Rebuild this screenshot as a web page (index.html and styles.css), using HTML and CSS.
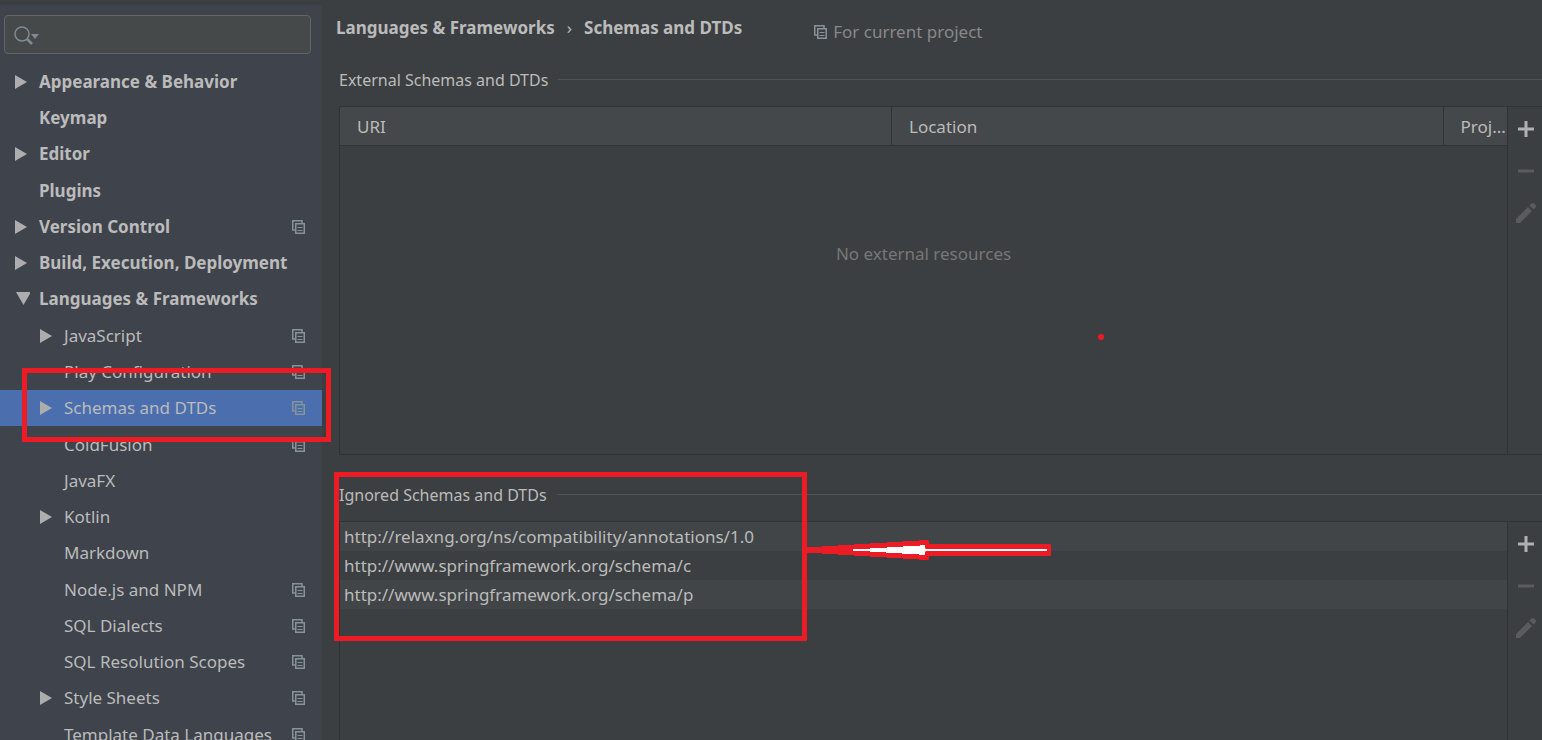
FILE: index.html
```html
<!DOCTYPE html>
<html lang="en">
<head>
  <meta charset="UTF-8">
  <title>Settings</title>
  <link rel="stylesheet" href="styles.css">
</head>
<body>
  <svg class="sprite" aria-hidden="true">
    <symbol id="project" viewBox="0 0 14 14">
      <path d="M4 10H1.750V.750H11V3" fill="none" stroke="currentColor" stroke-width="1.500"/>
      <rect x="4.750" y="3.750" width="8.500" height="9.500" fill="none" stroke="currentColor" stroke-width="1.500"/>
      <path d="M6.500 7.500h5M6.500 10.500h5" stroke="currentColor" stroke-width="1"/>
    </symbol>
    <symbol id="right" viewBox="0 0 14 14"><path d="M1 0l12 7-12 7z" fill="currentColor"/></symbol>
    <symbol id="down" viewBox="0 0 14 14"><path d="M0 0h15L7.500 13z" fill="currentColor"/></symbol>
    <symbol id="plus" viewBox="0 0 22 22"><path d="M9.500 3h3v6.500H19v3h-6.500V19h-3v-6.500H3v-3h6.500z" fill="currentColor"/></symbol>
    <symbol id="minus" viewBox="0 0 22 22"><path d="M3 9.500h16v3H3z" fill="currentColor"/></symbol>
    <symbol id="pencil" viewBox="0 0 22 22">
      <path d="M1 17L13 5l4 4L5 21H1zM14.500 3.500l2-2q1.500-1 3 .5l1 1q1 1.500 0 2.500l-2 2z" fill="currentColor"/>
    </symbol>
  </svg>

  <aside class="sidebar">
    <label class="search">
      <svg class="search-icon" viewBox="0 0 26 20" aria-hidden="true">
        <circle cx="8" cy="8" r="7" fill="none" stroke="currentColor" stroke-width="1.500"/>
        <path d="M13 13l5 5" stroke="currentColor" stroke-width="2.500"/>
        <path d="M17 8h8l-4 5z" fill="currentColor"/>
      </svg>
      <input type="text" aria-label="Search settings">
    </label>

    <ul class="tree">
      <li><a href="#"><svg class="arrow"><use href="#right"/></svg><span>Appearance &amp; Behavior</span></a></li>
      <li><a href="#"><span>Keymap</span></a></li>
      <li><a href="#"><svg class="arrow"><use href="#right"/></svg><span>Editor</span></a></li>
      <li><a href="#"><span>Plugins</span></a></li>
      <li><a href="#"><svg class="arrow"><use href="#right"/></svg><span>Version Control</span><svg class="project"><use href="#project"/></svg></a></li>
      <li><a href="#"><svg class="arrow"><use href="#right"/></svg><span>Build, Execution, Deployment</span></a></li>
      <li>
        <a href="#"><svg class="arrow open"><use href="#down"/></svg><span>Languages &amp; Frameworks</span></a>
        <ul class="subtree">
          <li><a href="#"><svg class="arrow"><use href="#right"/></svg><span>JavaScript</span><svg class="project"><use href="#project"/></svg></a></li>
          <li><a href="#"><span>Play Configuration</span><svg class="project"><use href="#project"/></svg></a></li>
          <li><a href="#" class="selected"><svg class="arrow"><use href="#right"/></svg><span>Schemas and DTDs</span><svg class="project"><use href="#project"/></svg></a></li>
          <li><a href="#"><span>ColdFusion</span><svg class="project"><use href="#project"/></svg></a></li>
          <li><a href="#"><span>JavaFX</span></a></li>
          <li><a href="#"><svg class="arrow"><use href="#right"/></svg><span>Kotlin</span></a></li>
          <li><a href="#"><span>Markdown</span></a></li>
          <li><a href="#"><span>Node.js and NPM</span><svg class="project"><use href="#project"/></svg></a></li>
          <li><a href="#"><span>SQL Dialects</span><svg class="project"><use href="#project"/></svg></a></li>
          <li><a href="#"><span>SQL Resolution Scopes</span><svg class="project"><use href="#project"/></svg></a></li>
          <li><a href="#"><svg class="arrow"><use href="#right"/></svg><span>Style Sheets</span><svg class="project"><use href="#project"/></svg></a></li>
          <li><a href="#"><span>Template Data Languages</span><svg class="project"><use href="#project"/></svg></a></li>
        </ul>
      </li>
    </ul>
  </aside>

  <main class="content">
    <header class="header">
      <h1 class="breadcrumb">
        <span>Languages &amp; Frameworks</span>
        <span class="separator">›</span>
        <span>Schemas and DTDs</span>
      </h1>
      <p class="scope"><svg class="project"><use href="#project"/></svg>For current project</p>
    </header>

    <section class="group external">
      <h2>External Schemas and DTDs</h2>
      <div class="panel">
        <div class="list">
          <table>
            <thead>
              <tr><th>URI</th><th>Location</th><th class="narrow">Proj...</th></tr>
            </thead>
          </table>
          <p class="empty">No external resources</p>
        </div>
        <div class="toolbar">
          <button aria-label="Add"><svg><use href="#plus"/></svg></button>
          <button aria-label="Remove" disabled><svg><use href="#minus"/></svg></button>
          <button aria-label="Edit" disabled><svg><use href="#pencil"/></svg></button>
        </div>
      </div>
    </section>

    <section class="group ignored">
      <h2>Ignored Schemas and DTDs</h2>
      <div class="panel">
        <ul class="list urls">
          <li>http://relaxng.org/ns/compatibility/annotations/1.0</li>
          <li>http://www.springframework.org/schema/c</li>
          <li>http://www.springframework.org/schema/p</li>
        </ul>
        <div class="toolbar">
          <button aria-label="Add"><svg><use href="#plus"/></svg></button>
          <button aria-label="Remove" disabled><svg><use href="#minus"/></svg></button>
          <button aria-label="Edit" disabled><svg><use href="#pencil"/></svg></button>
        </div>
      </div>
    </section>
  </main>

  <!-- red marks drawn over the dialog -->
  <div class="mark mark-menu"></div>
  <div class="mark mark-list"></div>
  <div class="mark-dot"></div>
  <svg class="mark-arrow" viewBox="0 0 246 22" aria-hidden="true">
    <path d="M0 7h16V6h16V5h16V4h16V3h17V2h16V1h16V0h9l1 1v3h121l1 1v10l-1 1H123v3l-1 1h-9v-1H97v-1H81v-1H64v-1H48v-1H32v-1H16v-1H0z" fill="#ed1c24"/>
    <path d="M47 9h17V8h17V7h16V6h17V5h5v3l1 1h121v2H120l-1 1v3h-6v-1H96v-1H80v-1H64v-1H47z" fill="#fff"/>
  </svg>
</body>
</html>
```

FILE: styles.css
```css
* {
  box-sizing: border-box;
}
body {
  margin: 0;
  height: 100vh;
  display: flex;
  position: relative;
  overflow: hidden;
  padding-top: 5px;
  background: #3c3f41;
  color: #bbbbbb;
  font-family: "Noto Sans", "Open Sans", sans-serif;
  font-size: 17px;
  line-height: 24px;
}
h1, h2, p, ul {
  margin: 0;
  padding: 0;
}
ul {
  list-style: none;
}
svg {
  display: block;
  flex: none;
}
.sprite {
  position: absolute;
  width: 0;
  height: 0;
}

/* sidebar */
.sidebar {
  flex: none;
  width: 322px;
  background: #3f434b;
  overflow: hidden;
}
.search {
  display: flex;
  align-items: center;
  height: 39px;
  margin: 10px 11px 10px 4px;
  padding: 2px 9px 0;
  border: 1px solid #646464;
  border-radius: 4px;
  background: #45494a;
}
.search-icon {
  width: 26px;
  height: 20px;
  color: #7f8b91;
}
.search input {
  flex: 1;
  min-width: 0;
  border: none;
  outline: none;
  background: none;
  color: inherit;
  font: inherit;
}
.tree a {
  display: flex;
  align-items: center;
  height: 36px;
  padding: 0 17px 0 39px;
  color: inherit;
  font-weight: bold;
  text-decoration: none;
  white-space: nowrap;
}
.tree > li:nth-child(4n) > a,
.subtree > li:nth-child(4n) > a {
  height: 37px;
}
.subtree {
  padding-top: 1px;
}
.tree .subtree a {
  padding-left: 64px;
  font-weight: normal;
}
.tree a.selected {
  background: #4b6eaf;
}
.arrow {
  width: 14px;
  height: 14px;
  margin-left: -25px;
  margin-right: 11px;
  color: #adadad;
}
.arrow.open {
  margin-left: -23px;
  margin-right: 9px;
}
.project {
  width: 14px;
  height: 14px;
  color: #87939a;
}
.tree .project {
  margin-left: auto;
}

/* content */
.content {
  flex: 1;
  min-width: 0;
  display: flex;
  flex-direction: column;
  padding-left: 17px;
}
.header {
  display: flex;
  align-items: center;
  height: 46px;
}
.breadcrumb {
  display: flex;
  margin-left: -3px;
  font-size: 17px;
}
.separator {
  margin: 0 12px;
  font-weight: normal;
}
.scope {
  display: flex;
  align-items: center;
  gap: 6px;
  margin-left: 71px;
  padding-top: 8px;
  color: #888888;
}
.group {
  display: flex;
  flex-direction: column;
}
.external {
  flex: none;
  height: 404px;
  padding-top: 2px;
}
.ignored {
  flex: 1;
  padding-top: 13px;
}
.group h2 {
  display: flex;
  align-items: center;
  gap: 10px;
  height: 53px;
  font-size: 16px;
  font-weight: normal;
}
.group h2::after {
  content: "";
  flex: 1;
  height: 1px;
  background: #515151;
}
.panel {
  flex: 1;
  display: flex;
  border-top: 1px solid #323232;
}
.external .panel {
  border-bottom: 1px solid #323232;
}
.list {
  flex: 1;
  min-width: 0;
  display: flex;
  flex-direction: column;
  border: 1px solid #323232;
  border-width: 0 1px;
}
table {
  width: 100%;
  table-layout: fixed;
  border-collapse: collapse;
}
th {
  height: 38px;
  padding: 3px 0 0 17px;
  border-bottom: 1px solid #323232;
  border-right: 1px solid #323232;
  background: #45484a;
  font-weight: normal;
  text-align: left;
  white-space: nowrap;
}
th.narrow {
  width: 64px;
  border-right: none;
}
.empty {
  padding-top: 96px;
  color: #777777;
  text-align: center;
}
.urls li {
  height: 29px;
  padding-left: 4px;
  line-height: 30px;
}
.urls li:nth-child(odd) {
  background: #414547;
}
.toolbar {
  flex: none;
  width: 34px;
  display: flex;
  flex-direction: column;
  align-items: center;
  gap: 20px;
  padding: 11px 0 0 2px;
}
.toolbar button {
  padding: 0;
  border: none;
  background: none;
  color: #afb1b3;
  cursor: pointer;
}
.toolbar button:disabled {
  color: #5b5b5b;
}
.toolbar svg {
  width: 22px;
  height: 22px;
}

/* marks */
.mark {
  position: absolute;
  border: 5px solid #ed1c24;
}
.mark-menu {
  left: 22px;
  top: 368px;
  width: 309px;
  height: 74px;
}
.mark-list {
  left: 334px;
  top: 472px;
  width: 473px;
  height: 169px;
}
.mark-dot {
  position: absolute;
  left: 1098px;
  top: 334px;
  width: 6px;
  height: 6px;
  border-radius: 50%;
  background: #ed1c24;
}
.mark-arrow {
  position: absolute;
  left: 806px;
  top: 540px;
  width: 246px;
  height: 22px;
}
```
